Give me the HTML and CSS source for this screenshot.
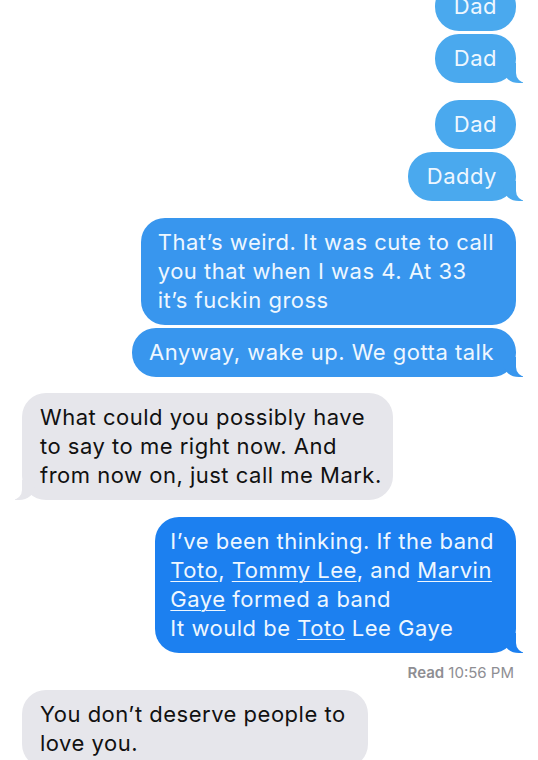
FILE: index.html
```html
<!DOCTYPE html>
<html>
<head>
<meta charset="utf-8">
<link rel="stylesheet" href="styles.css">
</head>
<body>
<div class="thread">
  <div class="bubble out light first">Dad</div>
  <div class="bubble out light near tail">Dad</div>
  <div class="bubble out light far">Dad</div>
  <div class="bubble out light near tail">Daddy</div>
  <div class="bubble out mid far">That’s weird. It was cute to call<br>you that when I was 4. At 33<br>it’s fuckin gross</div>
  <div class="bubble out mid near tail">Anyway, wake up. We gotta talk</div>
  <div class="bubble in mark mid-gap tail">What could you possibly have<br>to say to me right now. And<br>from now on, just call me Mark.</div>
  <div class="bubble out deep far tail">I’ve been thinking. If the band<br><span class="link">Toto</span>, <span class="link">Tommy Lee</span>, and <span class="link">Marvin</span><br><span class="link">Gaye</span> formed a band<br>It would be <span class="link">Toto</span> Lee Gaye</div>
  <div class="receipt"><b>Read</b> 10:56 PM</div>
  <div class="bubble in after-receipt">You don’t deserve people to<br>love you.</div>
</div>
</body>
</html>
```
FILE: styles.css
```css
html, body {
  margin: 0;
  padding: 0;
  background: #ffffff;
  overflow: hidden;
  height: 760px;
}
body {
  font-family: Inter, "Liberation Sans", Arial, sans-serif;
}
.thread {
  display: flex;
  flex-direction: column;
  padding: 0 22px 0 22px;
}
.bubble {
  position: relative;
  font-size: 22px;
  letter-spacing: 0.5px;
  line-height: 29px;
  padding: 10px 22px 10px 17px;
  border-radius: 24px;
  white-space: nowrap;
}
.out {
  align-self: flex-end;
  color: #eef7ff;
}
.in {
  align-self: flex-start;
  background: #e6e6eb;
  color: #111111;
  padding: 10px 22px 10px 18px;
}
.in.mark { padding-right: 11px; }
.light { background: #4aa9ee; padding-left: 19px; padding-right: 19px; }
.mid { background: #3896ee; }
.deep { background: #1c80f0; padding-left: 15px; }
.first { margin-top: -18px; }
.near { margin-top: 3px; }
.far { margin-top: 17px; }
.mid-gap { margin-top: 16px; }
.after-receipt { margin-top: 8px; }
.link {
  text-decoration: underline;
  text-decoration-thickness: 1px;
  text-underline-offset: 3px;
}
.tail::before,
.tail::after {
  content: "";
  position: absolute;
  bottom: 0;
  height: 20px;
}
.out.tail::before {
  right: -7px;
  width: 20px;
  background: inherit;
  border-bottom-left-radius: 16px 14px;
}
.out.tail::after {
  right: -26px;
  width: 26px;
  background: #ffffff;
  border-bottom-left-radius: 10px;
}
.in.tail::before {
  left: -7px;
  width: 20px;
  background: inherit;
  border-bottom-right-radius: 16px 14px;
}
.in.tail::after {
  left: -26px;
  width: 26px;
  background: #ffffff;
  border-bottom-right-radius: 10px;
}
.receipt {
  align-self: flex-end;
  margin-top: 11px;
  margin-right: 2px;
  font-size: 15px;
  line-height: 18px;
  color: #8e8e93;
}
.receipt b {
  font-weight: 600;
}
```
